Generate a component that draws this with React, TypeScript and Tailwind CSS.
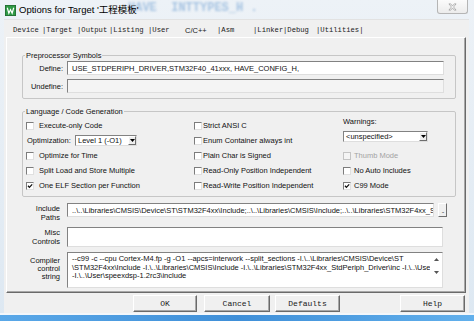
import React from 'react';

const INC =
  '..\\..\\Libraries\\CMSIS\\Device\\ST\\STM32F4xx\\Include;..\\..\\Libraries\\CMSIS\\Include;..\\..\\Libraries\\STM32F4xx_StdPeriph_Driver\\inc;..\\..\\User';
const CC = [
  '--c99 -c --cpu Cortex-M4.fp -g -O1 --apcs=interwork --split_sections -I.\\..\\Libraries\\CMSIS\\Device\\ST',
  '\\STM32F4xx\\Include -I.\\..\\Libraries\\CMSIS\\Include -I.\\..\\Libraries\\STM32F4xx_StdPeriph_Driver\\inc -I.\\..\\User',
  '-I.\\..\\User\\speexdsp-1.2rc3\\include',
];

function Check({ on, off }: { on?: boolean; off?: boolean }) {
  return (
    <span
      className={
        off
          ? 'relative block w-[8px] h-[8px] shrink-0 border border-[#c4c4c4] bg-[#f4f4f4]'
          : 'relative block w-[8px] h-[8px] shrink-0 border border-t-[#7c7c7c] border-l-[#7c7c7c] border-r-[#e0e0e0] border-b-[#e0e0e0] bg-white'
      }
    >
      {on && (
        <svg viewBox="0 0 6 6" className="absolute left-0 top-0 w-[6px] h-[6px]">
          <path d="M1 2.8 L2.4 4.4 L5.2 1.4" fill="none" stroke="#111" strokeWidth="1.3" />
        </svg>
      )}
    </span>
  );
}

function Opt({ label, on, off, gap }: { label: string; on?: boolean; off?: boolean; gap: string }) {
  return (
    <div className={`flex items-center h-[15px] ${gap}`}>
      <Check on={on} off={off} />
      <span className={off ? 'text-[#a3a3a3] whitespace-nowrap' : 'whitespace-nowrap'}>{label}</span>
    </div>
  );
}

function Arrow() {
  return (
    <span className="w-[8px] flex items-center justify-center border border-t-white border-l-white border-r-[#6e6e6e] border-b-[#6e6e6e] bg-[#eeeeee]">
      <svg viewBox="0 0 5 3" className="w-[5px] h-[3px]">
        <path d="M0 0H5L2.5 3Z" fill="#000" />
      </svg>
    </span>
  );
}

const sunken =
  'border border-t-[#828282] border-l-[#828282] border-r-[#dedede] border-b-[#dedede]';

export default function App() {
  return (
    <div className="relative w-[474px] h-[321px] overflow-hidden flex flex-col bg-gradient-to-b from-[#edf2f7] to-[#dde8f2] font-['Liberation_Sans',Arial,sans-serif] text-[7.5px] leading-[9px] text-[#111]">
      {/* title bar */}
      <div className="relative h-[19px] shrink-0 flex items-start">
        <span className="absolute left-[128px] top-[1px] font-['Liberation_Mono',monospace] font-bold text-[12px] leading-[14px] text-[#a7c4e2] blur-[1px] whitespace-pre">
          HAVE  INTTYPES_H .
        </span>
        <svg viewBox="0 0 12 12" className="relative mt-[5px] ml-[5px] w-[11px] h-[11px]">
          <rect x="0.5" y="0.5" width="11" height="11" fill="#2f9a45" stroke="#1d6e2e" />
          <path d="M2.5 3 L4.2 9 L6 5 L7.8 9 L9.5 3" fill="none" stroke="#fff" strokeWidth="1.3" />
        </svg>
        <span className="relative ml-[3px] mt-[4px] text-[9.5px] leading-[11px] text-black font-['Liberation_Sans','Noto_Sans_CJK_SC',sans-serif]">
          Options for Target '工程模板'
        </span>
        <div className="ml-auto mr-[6px] w-[31px] h-[14px] flex items-center justify-center bg-gradient-to-b from-[#fbfbfb] to-[#ececec] border border-t-0 border-[#b5b5b5] rounded-b-[3px]">
          <svg viewBox="0 0 10 9" className="w-[9px] h-[8px]">
            <path
              d="M1 1 H3 L5 3.5 L7 1 H9 L6.2 4.5 L9 8 H7 L5 5.5 L3 8 H1 L3.8 4.5 Z"
              fill="#fff"
              stroke="#8a8a8a"
              strokeWidth="0.7"
            />
          </svg>
        </div>
      </div>

      {/* frame + client */}
      <div className="flex-1 flex pl-[4px] pr-[5px]">
        <div className="flex-1 flex flex-col bg-[#f0f0f0] border-t border-[#e2e2e2]">
          {/* tab strip */}
          <div className="h-[17px] flex items-end pb-[2px] pl-[9px] font-['Liberation_Mono',monospace] text-[7.2px] leading-[9px] text-[#1a1a1a] whitespace-nowrap">
            <span className="w-[29px] shrink-0">Device</span>
            <span className="w-[35px] shrink-0">|Target</span>
            <span className="w-[32px] shrink-0">|Output</span>
            <span className="w-[39px] shrink-0">|Listing</span>
            <span className="w-[37px] shrink-0">|User</span>
            <span className="w-[32px] shrink-0 font-['Liberation_Sans',Arial,sans-serif] text-[7.5px]">C/C++</span>
            <span className="w-[36px] shrink-0">|Asm</span>
            <span className="w-[30px] shrink-0">|Linker</span>
            <span className="w-[33px] shrink-0">|Debug</span>
            <span className="shrink-0">|Utilities|</span>
          </div>

          {/* tab panel */}
          <div className="h-[256px] ml-[2px] mr-[3px] flex flex-col border border-t-white border-l-white border-r-[#6a6a6a] border-b-[#6a6a6a] shadow-[inset_-1px_-1px_0_#a8a8a8]">
            {/* Preprocessor Symbols */}
            <fieldset className="mt-[13px] ml-[15px] mr-[9px] border border-[#c6c6c6] rounded-[2px] pb-[5px]">
              <legend className="ml-[2px] px-[1px] leading-[9px]">Preprocessor Symbols</legend>
              <div className="flex items-center mt-[1px]">
                <span className="w-[40px] text-right">Define:</span>
                <div className={`ml-[4px] mr-[11px] flex-1 h-[14px] flex items-center pl-[4px] bg-white overflow-hidden whitespace-nowrap ${sunken}`}>
                  USE_STDPERIPH_DRIVER,STM32F40_41xxx, HAVE_CONFIG_H,
                </div>
              </div>
              <div className="flex items-center mt-[4px]">
                <span className="w-[40px] text-right">Undefine:</span>
                <div className={`ml-[4px] mr-[11px] flex-1 h-[14px] bg-[#f4f4f4] ${sunken}`} />
              </div>
            </fieldset>

            {/* Language / Code Generation */}
            <fieldset className="mt-[8px] ml-[15px] mr-[9px] border border-[#c6c6c6] rounded-[2px]">
              <legend className="ml-[2px] px-[1px] leading-[9px]">Language / Code Generation</legend>
              <div className="flex pt-[2px] pb-[3px]">
                <div className="w-[171px] pl-[3px] flex flex-col">
                  <Opt label="Execute-only Code" gap="gap-[5px]" />
                  <div className="flex items-center h-[15px]">
                    <span className="w-[49px] pl-[1px]">Optimization:</span>
                    <div className={`flex h-[11px] w-[62px] bg-white ${sunken}`}>
                      <span className="flex-1 pl-[2px] leading-[9px] whitespace-nowrap">Level 1 (-O1)</span>
                      <Arrow />
                    </div>
                  </div>
                  <Opt label="Optimize for Time" gap="gap-[5px]" />
                  <Opt label="Split Load and Store Multiple" gap="gap-[5px]" />
                  <Opt label="One ELF Section per Function" on gap="gap-[5px]" />
                </div>
                <div className="w-[149px] flex flex-col">
                  <Opt label="Strict ANSI C" gap="gap-[1px]" />
                  <Opt label="Enum Container always int" gap="gap-[1px]" />
                  <Opt label="Plain Char is Signed" gap="gap-[1px]" />
                  <Opt label="Read-Only Position Independent" gap="gap-[1px]" />
                  <Opt label="Read-Write Position Independent" gap="gap-[1px]" />
                </div>
                <div className="flex-1 flex flex-col">
                  <span className="-mt-[1px] h-[9px]">Warnings:</span>
                  <div className={`mt-[5px] flex h-[11px] w-[85px] bg-white ${sunken}`}>
                    <span className="flex-1 pl-[2px] leading-[9px] whitespace-nowrap">&lt;unspecified&gt;</span>
                    <Arrow />
                  </div>
                  <div className="mt-[6px]" />
                  <Opt label="Thumb Mode" off gap="gap-[3px]" />
                  <Opt label="No Auto Includes" gap="gap-[3px]" />
                  <Opt label="C99 Mode" on gap="gap-[3px]" />
                </div>
              </div>
            </fieldset>

            {/* Include Paths */}
            <div className="flex items-start mt-[6px]">
              <span className="w-[53px] mt-[2px] text-right leading-[8.5px]">
                Include
                <br />
                Paths
              </span>
              <div className={`ml-[7px] w-[367px] h-[14px] flex items-center pl-[4px] bg-white overflow-hidden whitespace-nowrap ${sunken}`}>
                {INC}
              </div>
              <div className="ml-[4px] w-[9px] h-[14px] flex items-end justify-center pb-[2px] border border-t-white border-l-white border-r-[#6e6e6e] border-b-[#6e6e6e] text-[6px] leading-[5px] tracking-[-1px] overflow-hidden">
                ...
              </div>
            </div>

            {/* Misc Controls */}
            <div className="flex items-start mt-[5px]">
              <span className="w-[53px] mt-[2px] text-right leading-[8.5px]">
                Misc
                <br />
                Controls
              </span>
              <div className={`ml-[7px] w-[376px] h-[20px] bg-white ${sunken}`} />
            </div>

            {/* Compiler control string */}
            <div className="flex items-start mt-[5px]">
              <span className="w-[53px] mt-[5px] text-right leading-[8px]">
                Compiler
                <br />
                control
                <br />
                string
              </span>
              <div className={`ml-[7px] w-[376px] h-[36px] flex bg-white ${sunken}`}>
                <div className="flex-1 pl-[4px] pt-[2px] leading-[8.5px] overflow-hidden whitespace-nowrap">
                  {CC.map((l) => (
                    <div key={l}>{l}</div>
                  ))}
                </div>
                <div className="w-[12px] flex flex-col items-center pt-[5px] gap-[10px]">
                  <svg viewBox="0 0 5 3" className="w-[5px] h-[3px]">
                    <path d="M0 3H5L2.5 0Z" fill="#555" />
                  </svg>
                  <svg viewBox="0 0 5 3" className="w-[5px] h-[3px]">
                    <path d="M0 0H5L2.5 3Z" fill="#555" />
                  </svg>
                </div>
              </div>
            </div>
          </div>

          {/* buttons */}
          <div className="flex mt-[2px] h-[17px] font-['Liberation_Mono',monospace] text-[8px] text-[#1a1a1a]">
            <button className="ml-[129px] w-[64px] border border-t-white border-l-white border-r-[#6a6a6a] border-b-[#6a6a6a] shadow-[inset_-1px_-1px_0_#a8a8a8]">OK</button>
            <button className="ml-[7px] w-[66px] border border-t-white border-l-white border-r-[#6a6a6a] border-b-[#6a6a6a] shadow-[inset_-1px_-1px_0_#a8a8a8]">Cancel</button>
            <button className="ml-[5px] w-[65px] border border-t-white border-l-white border-r-[#6a6a6a] border-b-[#6a6a6a] shadow-[inset_-1px_-1px_0_#a8a8a8]">Defaults</button>
            <button className="ml-[60px] w-[65px] border border-t-white border-l-white border-r-[#6a6a6a] border-b-[#6a6a6a] shadow-[inset_-1px_-1px_0_#a8a8a8]">Help</button>
          </div>
        </div>
      </div>
      <div className="h-[2px] shrink-0 bg-[#f3f7fb]" />
      <div className="h-[6px] shrink-0 bg-gradient-to-r from-[#5aa8e8] via-[#3f8fd8] to-[#62b0ec]" />
    </div>
  );
}
